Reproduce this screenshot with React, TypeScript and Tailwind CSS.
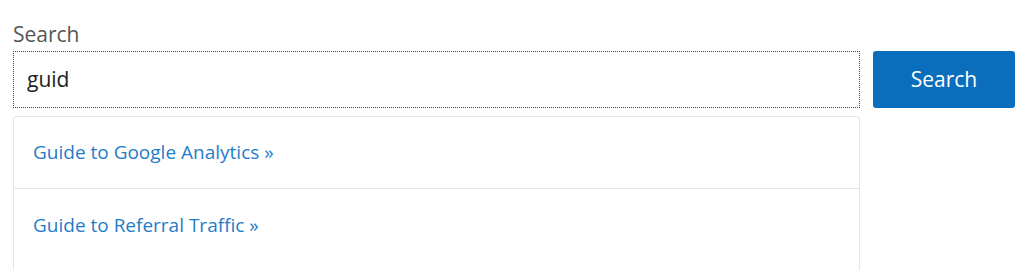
import React from "react";

export default function App() {
  return (
    <div className="w-[1024px] h-[270px] overflow-hidden bg-white pl-[13px] pr-[9px] pt-[21px]" style={{ fontFamily: '"Open Sans", sans-serif' }}>
      <label className="block text-[21px] leading-[27px] text-[#555555]">Search</label>
      <div className="flex gap-[13px] mt-[3px]">
        <div className="flex-1 flex flex-col">
          <div className="h-[57px] border border-dotted border-[#444444] flex items-center px-[13px] text-[21px] text-[#222222]">guid</div>
          <div className="mt-[8px] h-[200px] border border-[#e6e6e6] rounded-t-[4px] border-b-0">
            <div className="h-[72px] flex items-center px-[19px] border-b border-[#e6e6e6] text-[19px] text-[#1f7cc8]">Guide to Google Analytics »</div>
            <div className="h-[72px] flex items-center px-[19px] text-[19px] text-[#1f7cc8]">Guide to Referral Traffic »</div>
          </div>
        </div>
        <button className="w-[142px] h-[57px] rounded-[3px] bg-[#0b6ebd] text-white text-[21px]">Search</button>
      </div>
    </div>
  );
}
